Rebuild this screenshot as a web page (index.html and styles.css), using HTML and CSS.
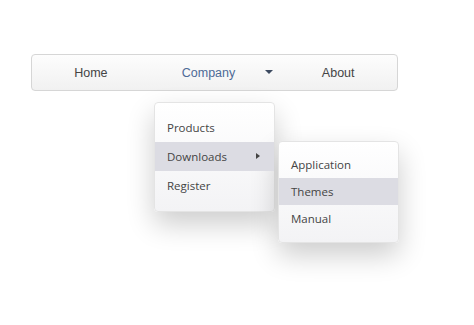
FILE: index.html
```html
<!DOCTYPE html>
<html lang="en">
<head>
    <meta charset="UTF-8">
    <meta name="viewport" content="width=device-width, initial-scale=1.0">
    <title>Dropdown Menu</title>
    <link rel="stylesheet" href="styles.css">
</head>
<body>
    <div class="navbar">
        <div class="nav-item">Home</div>
        <div class="nav-item has-caret">
            <span class="current">Company</span>
            <span class="caret-down"></span>
        </div>
        <div class="nav-item">About</div>
    </div>

    <div class="flyouts">
        <div class="flyout">
            <div class="fly-row">Products</div>
            <div class="fly-row active">Downloads <span class="caret-right"></span></div>
            <div class="fly-row">Register</div>
        </div>
        <div class="flyout second">
            <div class="fly-row">Application</div>
            <div class="fly-row active">Themes</div>
            <div class="fly-row">Manual</div>
        </div>
    </div>
</body>
</html>
```

FILE: styles.css
```css
body {
    margin: 0;
    padding: 54px 0 0 31px;
    box-sizing: border-box;
    min-height: 325px;
    background-color: #fff;
    font-family: "Liberation Sans", Arial, sans-serif;
}
.navbar {
    display: flex;
    width: 365px;
    height: 35px;
    border: 1px solid #d6d6d6;
    border-radius: 4px;
    background: linear-gradient(#fdfdfd, #f1f1f1);
}
.nav-item {
    flex: 1;
    position: relative;
    display: flex;
    align-items: center;
    justify-content: center;
    font-size: 12.5px;
    color: #444;
}
.nav-item:last-child {
    padding-left: 2px;
}
.nav-item.has-caret {
    padding-right: 10px;
}
.current {
    color: #4d6a96;
}
.caret-down {
    position: absolute;
    right: 4px;
    top: 15px;
    width: 0;
    height: 0;
    border-left: 4px solid transparent;
    border-right: 4px solid transparent;
    border-top: 4px solid #3c4a60;
}
.flyouts {
    display: flex;
    align-items: flex-start;
    gap: 3px;
    margin: 11px 0 0 123px;
}
.flyout {
    box-sizing: border-box;
    width: 121px;
    padding: 10px 0 11px;
    border: 1px solid #e4e4e4;
    border-radius: 4px;
    background: linear-gradient(#ffffff, #f3f3f5);
    box-shadow: 0 12px 28px rgba(0,0,0,0.2);
    font-family: "Open Sans", "Noto Sans", sans-serif;
    font-size: 11.5px;
    color: #444;
}
.fly-row {
    position: relative;
    height: 29px;
    line-height: 29px;
    padding-left: 12px;
}
.fly-row.active {
    background-color: #dcdce3;
}
.caret-right {
    position: absolute;
    right: 14px;
    top: 11px;
    width: 0;
    height: 0;
    border-top: 3.5px solid transparent;
    border-bottom: 3.5px solid transparent;
    border-left: 4px solid #444;
}
.flyout.second {
    margin-top: 39px;
    padding: 9px 0 10px;
}
.second .fly-row {
    height: 27px;
    line-height: 27px;
}
```
